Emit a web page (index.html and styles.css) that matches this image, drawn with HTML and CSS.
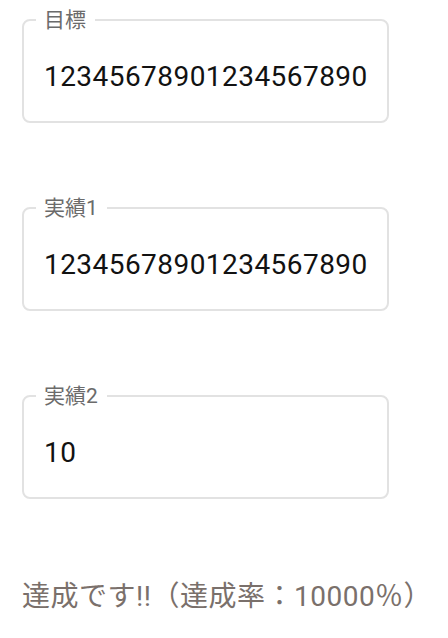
FILE: index.html
```html
<!DOCTYPE html>
<html lang="ja">
<head>
<meta charset="utf-8">
<link rel="stylesheet" href="styles.css">
</head>
<body>
<main class="page">
  <fieldset class="field">
    <legend class="field-label">目標</legend>
    <div class="field-value">12345678901234567890</div>
  </fieldset>
  <fieldset class="field">
    <legend class="field-label">実績1</legend>
    <div class="field-value">12345678901234567890</div>
  </fieldset>
  <fieldset class="field">
    <legend class="field-label">実績2</legend>
    <div class="field-value">10</div>
  </fieldset>
  <p class="result">達成です!!（達成率：10000％）</p>
</main>
</body>
</html>
```
FILE: styles.css
```css
html, body {
  margin: 0;
  padding: 0;
  background: #ffffff;
}
body {
  font-family: Roboto, "Noto Sans CJK JP", sans-serif;
}
.page {
  display: flex;
  flex-direction: column;
  gap: 73px;
  padding: 8px 0 0 22px;
  width: 367px;
}
.field {
  margin: 0;
  border: 2px solid #e2e2e2;
  border-radius: 8px;
  padding: 29px 20px 28px;
  min-width: 0;
}
.field-label {
  font-size: 21px;
  line-height: 24px;
  color: #6b6b6b;
  padding: 0 9px 0 8px;
  margin-left: -8px;
}
.field-value {
  font-size: 28px;
  line-height: 32px;
  letter-spacing: 0.45px;
  color: #121212;
  white-space: nowrap;
}
.result {
  margin: 5px 0 0;
  font-size: 28px;
  line-height: 40px;
  letter-spacing: 0.5px;
  color: #7a706b;
  white-space: nowrap;
}
```
